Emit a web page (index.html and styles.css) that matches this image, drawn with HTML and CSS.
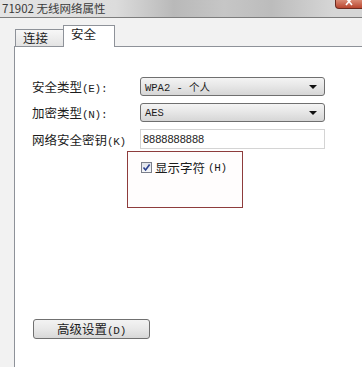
FILE: index.html
```html
<!DOCTYPE html>
<html lang="zh-CN">
<head>
    <meta charset="UTF-8">
    <title>无线网络属性</title>
    <link rel="stylesheet" href="styles.css">
</head>
<body>
    <!-- 标题栏 -->
    <div class="titlebar">
        <span class="title">71902 无线网络属性</span>
        <span class="close">
            <svg width="10" height="6" viewBox="0 0 10 6"><path d="M2 -2 L8 5 M8 -2 L2 5" stroke="#fff" stroke-width="1.6"/></svg>
        </span>
    </div>

    <div class="tabs">
        <div class="tab">连接</div>
        <div class="tab active">安全</div>
    </div>

    <div class="panel">
        <div class="form">
            <label>安全类型<span class="key">(E):</span></label>
            <div class="select"><span>WPA2 - 个人</span><i class="arrow"></i></div>

            <label>加密类型<span class="key">(N):</span></label>
            <div class="select"><span>AES</span><i class="arrow"></i></div>

            <label>网络安全密钥<span class="key">(K)</span></label>
            <div class="textbox">8888888888</div>
        </div>

        <div class="mark">
            <div class="check">
                <span class="box">
                    <svg width="9" height="9" viewBox="0 0 9 9"><path d="M1.5 4.5 L3.6 7 L7.6 1.6" fill="none" stroke="#2a3f8f" stroke-width="1.6"/></svg>
                </span>
                显示字符<span class="key">(H)</span>
            </div>
        </div>

        <div class="button">高级设置<span class="key">(D)</span></div>
    </div>
</body>
</html>
```

FILE: styles.css
```css
body {
    margin: 0;
    width: 362px;
    height: 367px;
    overflow: hidden;
    background: #f2f2f2;
    font-family: "Noto Sans CJK SC", "Liberation Sans", sans-serif;
    font-size: 12.5px;
    color: #1c1c1c;
}

.titlebar {
    height: 17px;
    display: flex;
    align-items: flex-start;
    justify-content: space-between;
    border-bottom: 1px solid #7d7d7d;
    background: linear-gradient(90deg, #e4e4e4 0%, #dcdcdc 32%, #b9b9b9 48%, #c6c6c6 62%, #bcbcbc 75%, #d6d6d6 92%);
}
.title {
    margin-left: 2px;
    font-size: 11.5px;
    line-height: 16px;
    color: #3a3a3a;
}
.close {
    width: 26px;
    height: 8px;
    margin-right: -1px;
    border: 1px solid #6b2a20;
    border-top: none;
    border-radius: 0 0 0 4px;
    background: linear-gradient(#d98a74, #b9462f);
    display: flex;
    justify-content: center;
}

.tabs {
    display: flex;
    align-items: flex-end;
    margin-top: 7px;
    padding-left: 15px;
}
.tab {
    height: 16px;
    padding: 0 7px;
    width: 33px;
    border: 1px solid #8e9299;
    border-bottom: none;
    border-right: none;
    background: linear-gradient(#f7f7f7, #e3e3e3);
    line-height: 16px;
}
.tab.active {
    position: relative;
    height: 21px;
    width: 36px;
    margin-bottom: -1px;
    border-right: 1px solid #8e9299;
    background: #fff;
    line-height: 16px;
}

.panel {
    height: 330px;
    margin-left: 14px;
    border-top: 1px solid #8e9299;
    border-left: 1px solid #8e9299;
    background: #fff;
    padding: 30px 0 0 17px;
    box-sizing: border-box;
}

.key {
    font-family: "Liberation Mono", monospace;
    font-size: 11px;
    letter-spacing: -0.3px;
}

.form {
    display: grid;
    grid-template-columns: 108px 185px;
    row-gap: 7px;
    align-items: center;
}
.form label {
    white-space: nowrap;
}
.select {
    height: 17px;
    display: flex;
    align-items: center;
    justify-content: space-between;
    padding: 0 7px 0 4px;
    border: 1px solid #6f6f6f;
    border-radius: 3px;
    background: linear-gradient(#f4f4f4, #e6e6e6 50%, #d6d6d6);
    font-family: "Liberation Mono", "Noto Sans CJK SC", monospace;
    font-size: 10.5px;
}
.arrow {
    width: 0;
    height: 0;
    border-left: 4px solid transparent;
    border-right: 4px solid transparent;
    border-top: 4px solid #111;
}
.textbox {
    height: 18px;
    padding-left: 2px;
    border: 1px solid #d4d4d4;
    font-family: "Liberation Sans", sans-serif;
    font-size: 11px;
    line-height: 18px;
    color: #222;
}

.mark {
    width: 114px;
    height: 55px;
    margin: 2px 0 0 95px;
    border: 1.5px solid #8e3c3c;
    background: #fffdfd;
}
.check {
    display: flex;
    align-items: center;
    gap: 3px;
    margin: 6px 0 0 13px;
}
.box {
    width: 9px;
    height: 9px;
    border: 1px solid #7b7f8a;
    background: linear-gradient(#dfe2ea, #f6f7f9);
    display: flex;
}

.button {
    width: 115px;
    height: 18px;
    margin: 111px 0 0 1px;
    border: 1px solid #707070;
    border-radius: 3px;
    background: linear-gradient(#f3f3f3, #e8e8e8 50%, #d8d8d8);
    text-align: center;
    line-height: 18px;
}
```
